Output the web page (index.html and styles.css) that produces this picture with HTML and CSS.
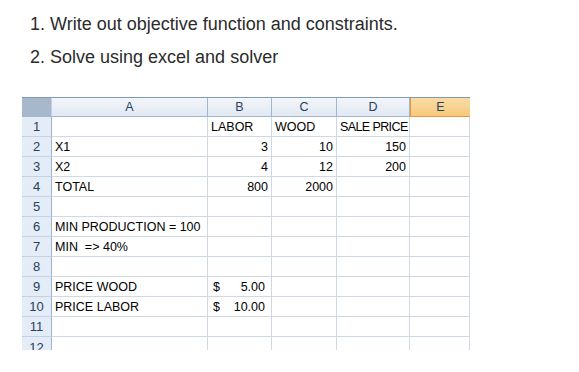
FILE: index.html
```html
<!DOCTYPE html>
<html>
<head>
<meta charset="utf-8">
<link rel="stylesheet" href="styles.css">
</head>
<body>
<div class="steps">
  <p>1. Write out objective function and constraints.</p>
  <p>2. Solve using excel and solver</p>
</div>
<div class="sheet">
  <div class="grid">
    <div class="corner"></div>
    <div class="ch">A</div><div class="ch">B</div><div class="ch">C</div><div class="ch">D</div><div class="ch sel">E</div>

    <div class="rh">1</div><div class="c"></div><div class="c">LABOR</div><div class="c">WOOD</div><div class="c tight">SALE PRICE</div><div class="c"></div>
    <div class="rh">2</div><div class="c">X1</div><div class="c r">3</div><div class="c r">10</div><div class="c r">150</div><div class="c"></div>
    <div class="rh">3</div><div class="c">X2</div><div class="c r">4</div><div class="c r">12</div><div class="c r">200</div><div class="c"></div>
    <div class="rh">4</div><div class="c">TOTAL</div><div class="c r">800</div><div class="c r">2000</div><div class="c"></div><div class="c"></div>
    <div class="rh">5</div><div class="c"></div><div class="c"></div><div class="c"></div><div class="c"></div><div class="c"></div>
    <div class="rh">6</div><div class="c">MIN PRODUCTION = 100</div><div class="c"></div><div class="c"></div><div class="c"></div><div class="c"></div>
    <div class="rh">7</div><div class="c">MIN &nbsp;=&gt; 40%</div><div class="c"></div><div class="c"></div><div class="c"></div><div class="c"></div>
    <div class="rh">8</div><div class="c"></div><div class="c"></div><div class="c"></div><div class="c"></div><div class="c"></div>
    <div class="rh">9</div><div class="c">PRICE WOOD</div><div class="c money"><span>$</span><span>5.00</span></div><div class="c"></div><div class="c"></div><div class="c"></div>
    <div class="rh">10</div><div class="c">PRICE LABOR</div><div class="c money"><span>$</span><span>10.00</span></div><div class="c"></div><div class="c"></div><div class="c"></div>
    <div class="rh">11</div><div class="c"></div><div class="c"></div><div class="c"></div><div class="c"></div><div class="c"></div>
    <div class="rh last">12</div><div class="c"></div><div class="c"></div><div class="c"></div><div class="c"></div><div class="c"></div>
  </div>
</div>
</body>
</html>
```
FILE: styles.css
```css
html, body {
  margin: 0;
  padding: 0;
  background: #ffffff;
}
.steps {
  padding: 8px 0 0 30px;
  font-family: "Liberation Sans", Arial, sans-serif;
  font-size: 18px;
  color: #2b2b2b;
}
.steps p {
  margin: 0;
  line-height: 33px;
}
.sheet {
  margin: 23px 0 0 22px;
  width: 448px;
  height: 253px;
  overflow: hidden;
}
.grid {
  display: grid;
  grid-template-columns: 30px 156px 64px 65px 73px 60px;
  grid-template-rows: 20px repeat(12, 20px);
  font-family: "Liberation Sans", Arial, sans-serif;
  font-size: 12.5px;
  color: #000;
}
.corner {
  background: #a8b8cc;
  border-top: 1px solid #7f98b6;
  border-right: 1px solid #c5d1e0;
  border-bottom: 1px solid #9eb6ce;
  box-sizing: border-box;
}
.ch {
  background: linear-gradient(#f3f6fb, #e1e8f2);
  border-top: 1px solid #7f98b6;
  border-right: 1px solid #9eb6ce;
  border-bottom: 1px solid #9eb6ce;
  box-sizing: border-box;
  display: flex;
  align-items: center;
  justify-content: center;
  color: #27415f;
}
.ch.sel {
  background: linear-gradient(#f9dba6, #f7ca7d);
  border-top: 1px solid #7f98b6;
  border-left: 1px solid #f29536;
  border-bottom: 1px solid #f29536;
  border-right: none;
  color: #27415f;
}
.rh {
  background: #e4ecf7;
  border-right: 1px solid #9eb6ce;
  border-bottom: 1px solid #c5d1e0;
  box-sizing: border-box;
  display: flex;
  align-items: center;
  justify-content: center;
  color: #27415f;
  font-size: 13px;
}
.rh.last {
  align-items: flex-start;
  padding-top: 3px;
}
.c {
  border-right: 1px solid #d0d7e5;
  border-bottom: 1px solid #d0d7e5;
  box-sizing: border-box;
  display: flex;
  align-items: center;
  padding: 0 3px;
  white-space: nowrap;
  overflow: visible;
}
.c.tight {
  letter-spacing: -0.6px;
}
.c.r {
  justify-content: flex-end;
}
.c.money {
  justify-content: space-between;
  padding: 0 6px 0 5px;
}
```
